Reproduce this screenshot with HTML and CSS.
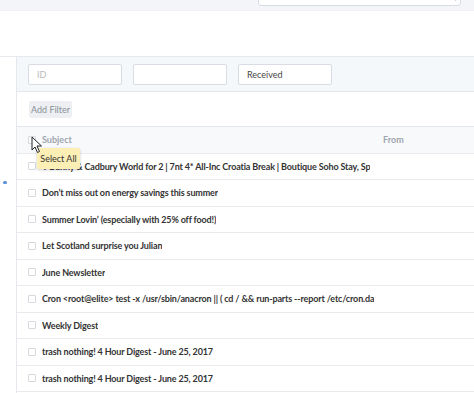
FILE: index.html
```html
<!DOCTYPE html>
<html>
<head>
<meta charset="utf-8">
<link rel="stylesheet" href="styles.css">
</head>
<body>
<div class="topbar">
  <div class="search"><span class="caret">▾</span></div>
</div>
<div class="spacer"></div>
<div class="layout">
  <div class="side"><span class="dot"></span></div>
  <div class="main">
    <div class="filters">
      <div class="inp ph">ID</div>
      <div class="inp"></div>
      <div class="inp">Received</div>
    </div>
    <div class="addbar"><span class="addbtn">Add Filter</span></div>
    <div class="table">
      <div class="row head">
        <span class="cb"></span>
        <span class="subj">Subject</span>
        <span class="from">From</span>
        <div class="tip">Select All</div>
        <svg class="cursor" width="12" height="18" viewBox="0 0 12 18"><path d="M1 1 L1 14 L4 11 L6.5 16.5 L8.5 15.5 L6 10 L10.5 10 Z" fill="#fff" stroke="#222" stroke-width="1"/></svg>
      </div>
      <div class="row"><span class="cb"></span><span class="t">Y Bunny &amp; Cadbury World for 2 | 7nt 4* All-Inc Croatia Break | Boutique Soho Stay, Sp</span></div>
      <div class="row"><span class="cb"></span><span class="t">Don’t miss out on energy savings this summer</span></div>
      <div class="row"><span class="cb"></span><span class="t">Summer Lovin’ (especially with 25% off food!)</span></div>
      <div class="row"><span class="cb"></span><span class="t">Let Scotland surprise you Julian</span></div>
      <div class="row"><span class="cb"></span><span class="t">June Newsletter</span></div>
      <div class="row"><span class="cb"></span><span class="t">Cron &lt;root@elite&gt; test -x /usr/sbin/anacron || ( cd / &amp;&amp; run-parts --report /etc/cron.da</span></div>
      <div class="row"><span class="cb"></span><span class="t">Weekly Digest</span></div>
      <div class="row"><span class="cb"></span><span class="t">trash nothing! 4 Hour Digest - June 25, 2017</span></div>
      <div class="row"><span class="cb"></span><span class="t">trash nothing! 4 Hour Digest - June 25, 2017</span></div>
    </div>
  </div>
</div>
</body>
</html>
```

FILE: styles.css
```css
* { box-sizing: border-box; }
html, body { margin: 0; padding: 0; background: #fff; overflow: hidden; }
body {
  font-family: "Lato", "Open Sans", sans-serif;
  width: 474px; height: 393px;
  color: #333;
}
.topbar {
  height: 11px;
  background: #f4f5f9;
  border-bottom: 1px solid #eef0f4;
  position: relative;
}
.search {
  position: absolute;
  left: 258px; top: -8px;
  width: 203px; height: 14px;
  background: #fff;
  border: 1px solid #d8dbe3;
  border-radius: 3px;
}
.caret { position: absolute; right: 3px; top: 3px; font-size: 6px; line-height: 6px; color: #999; }
.spacer { height: 46px; border-bottom: 1px solid #e6e9ee; }
.layout { display: flex; height: 340px; }
.side { width: 17px; position: relative; border-right: 1px solid #e5e8ec; }
.dot { position: absolute; left: 3px; top: 124px; width: 4px; height: 3px; border-radius: 2px; background: #5b8fd6; }
.main { flex: 1; display: flex; flex-direction: column; }
.filters {
  height: 35px;
  background: #f5f8fb;
  border-bottom: 1px solid #e3e7ec;
  display: flex; align-items: center;
  gap: 11px;
  padding-left: 11px;
}
.inp {
  width: 94px; height: 21px;
  background: #fff;
  border: 1px solid #d9dde3;
  border-radius: 2px;
  font-size: 9px;
  line-height: 19px;
  padding-left: 8px;
  color: #444;
}
.inp.ph { color: #bbb; }
.addbar { height: 34px; display: flex; align-items: center; padding-left: 12px; }
.addbtn {
  background: #edeff2;
  color: #8a9099;
  font-size: 9px;
  padding: 3px 2px;
  border-radius: 2px;
}
.table { border-top: 1px solid #e3e6ea; }
.row {
  height: 26.5px;
  display: flex; align-items: center;
  border-bottom: 1.5px solid #e8eaed;
  padding-left: 11px;
  position: relative;
  font-size: 9px;
  letter-spacing: -0.15px;
  font-weight: 700;
  color: #333;
  white-space: nowrap;
}
.row.head { background: #f7f9fb; font-weight: 700; color: #a0a5ad; letter-spacing: 0; }
.cb {
  width: 8px; height: 8px;
  border: 1px solid #d6d9de;
  border-radius: 1px;
  background: #fff;
  margin-right: 6px;
  flex: none;
}
.subj { flex: none; }
.from { position: absolute; left: 366px; }
.t { overflow: hidden; }
.tip {
  position: absolute;
  left: 20px; top: 21px;
  width: 43px; height: 21px;
  background: #fcefb5;
  color: #333;
  font-weight: 400;
  font-size: 9px;
  line-height: 21px;
  letter-spacing: 0;
  text-align: center;
  border-radius: 2px;
  box-shadow: 0 1px 3px rgba(0,0,0,0.2);
  z-index: 3;
}
.cursor { position: absolute; left: 14px; top: 9px; z-index: 4; }
```
